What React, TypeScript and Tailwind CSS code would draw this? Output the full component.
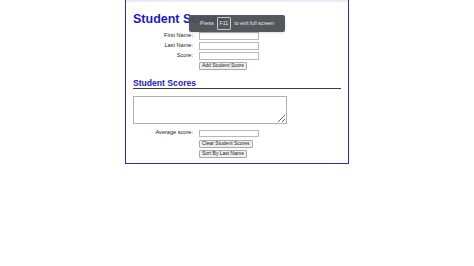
import React from "react";

const font = { fontFamily: '"Liberation Sans", Arial, sans-serif' };

function Field({ label, className = "" }: { label: string; className?: string }) {
  return (
    <div className={`flex items-center h-[7.5px] ${className}`}>
      <label className="w-[66px] pr-[6px] text-right text-[5.6px] leading-none text-[#222]">
        {label}
      </label>
      <input className="w-[60px] h-[7.5px] border border-[#b8b8b8] bg-white" />
    </div>
  );
}

function Btn({ children, className = "" }: { children: React.ReactNode; className?: string }) {
  return (
    <div className={`flex ${className}`}>
      <button className="h-[8px] px-[2px] ml-[66px] border border-[#a9a9a9] rounded-[1px] bg-[#efefef] text-[5px] leading-none text-[#222]">
        {children}
      </button>
    </div>
  );
}

export default function App() {
  return (
    <div className="w-[474px] h-[266px] bg-white relative overflow-hidden" style={font}>
      <div className="ml-[125px] w-[224px] border-x-[1.5px] border-b-[1.5px] border-[#2c2cc4] bg-white">
        <div className="h-[2px] bg-[#ececf8]" />
        <div className="pl-[7px] pr-[7px] pb-[5px]">
          <h1 className="mt-[9.5px] text-[12.5px] leading-[14px] font-bold text-[#1a1acc]">
            Student Scores
          </h1>
          <Field label="First Name:" className="mt-[6.5px]" />
          <Field label="Last Name:" className="mt-[2.5px]" />
          <Field label="Score:" className="mt-[2.5px]" />
          <Btn className="mt-[2px]">Add Student Score</Btn>
          <h2 className="mt-[8.5px] text-[8.6px] leading-[10px] font-bold text-[#1a1acc] border-b-[1.5px] border-[#3c3c3c]">
            Student Scores
          </h2>
          <textarea className="mt-[6.5px] block w-[154px] h-[28px] border border-[#b0b0b0] bg-white resize" />
          <Field label="Average score:" className="mt-[6px]" />
          <Btn className="mt-[2.5px]">Clear Student Scores</Btn>
          <Btn className="mt-[2px]">Sort By Last Name</Btn>
        </div>
      </div>

      <div className="absolute left-[189px] top-[15px] w-[96px] h-[17px] rounded-[2px] bg-[#4b4e53]/95 flex items-center justify-center gap-[3px] text-[5.3px] text-[#e8e8e8] shadow">
        <span>Press</span>
        <span className="px-[2px] py-[2.5px] border border-[#c8c8c8] rounded-[1px] leading-none">F11</span>
        <span>to exit full screen</span>
      </div>
    </div>
  );
}
